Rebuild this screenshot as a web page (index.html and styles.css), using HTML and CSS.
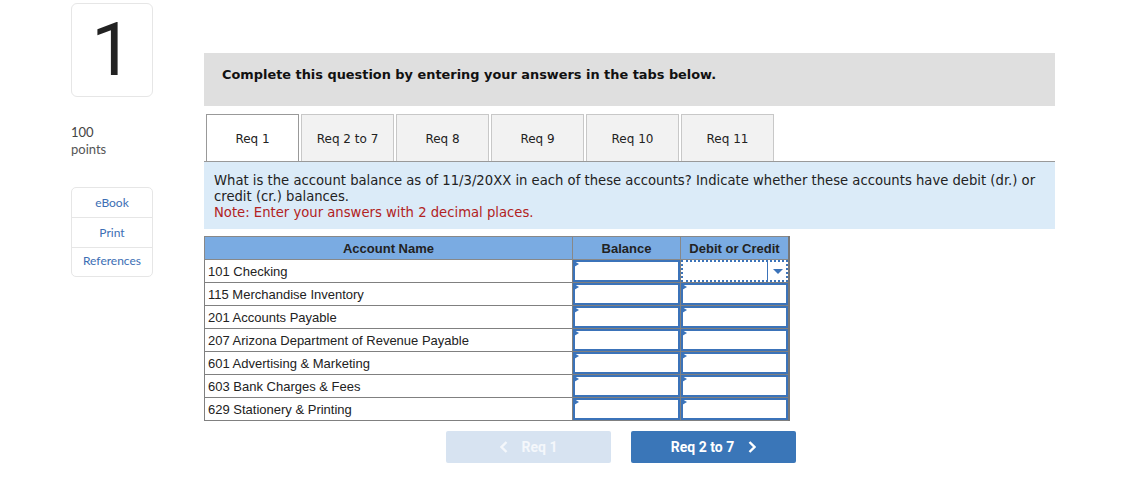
FILE: index.html
```html
<!DOCTYPE html>
<html>
<head>
<meta charset="utf-8">
<link rel="stylesheet" href="styles.css">
</head>
<body>
<div class="page">
  <aside class="side">
    <div class="qnum">1</div>
    <div class="pts"><div class="pts-n">100</div><div class="pts-l">points</div></div>
    <div class="links">
      <div class="link">eBook</div>
      <div class="link">Print</div>
      <div class="link">References</div>
    </div>
  </aside>
  <main class="main">
    <div class="banner">Complete this question by entering your answers in the tabs below.</div>
    <div class="tabs">
      <div class="tab active">Req 1</div>
      <div class="tab">Req 2 to 7</div>
      <div class="tab">Req 8</div>
      <div class="tab">Req 9</div>
      <div class="tab">Req 10</div>
      <div class="tab">Req 11</div>
    </div>
    <div class="prompt">
      <div>What is the account balance as of 11/3/20XX in each of these accounts? Indicate whether these accounts have debit (dr.) or credit (cr.) balances.</div>
      <div class="note">Note: Enter your answers with 2 decimal places.</div>
    </div>
    <table class="grid">
      <thead>
        <tr><th class="c-name">Account Name</th><th class="c-bal">Balance</th><th class="c-dc">Debit or Credit</th></tr>
      </thead>
      <tbody>
        <tr><td class="name">101 Checking</td><td class="in"><div class="box"></div></td><td class="in"><div class="sel"><span class="arrow"></span></div></td></tr>
        <tr><td class="name">115 Merchandise Inventory</td><td class="in"><div class="box"></div></td><td class="in"><div class="box"></div></td></tr>
        <tr><td class="name">201 Accounts Payable</td><td class="in"><div class="box"></div></td><td class="in"><div class="box"></div></td></tr>
        <tr><td class="name">207 Arizona Department of Revenue Payable</td><td class="in"><div class="box"></div></td><td class="in"><div class="box"></div></td></tr>
        <tr><td class="name">601 Advertising &amp; Marketing</td><td class="in"><div class="box"></div></td><td class="in"><div class="box"></div></td></tr>
        <tr><td class="name">603 Bank Charges &amp; Fees</td><td class="in"><div class="box"></div></td><td class="in"><div class="box"></div></td></tr>
        <tr><td class="name">629 Stationery &amp; Printing</td><td class="in"><div class="box"></div></td><td class="in"><div class="box"></div></td></tr>
      </tbody>
    </table>
    <div class="nav">
      <div class="btn prev"><svg class="chev" width="8" height="12" viewBox="0 0 8 12"><polyline points="6.5,1 1.5,6 6.5,11" fill="none" stroke="currentColor" stroke-width="2.4"/></svg><span>Req 1</span></div>
      <div class="btn next"><span>Req 2 to 7</span><svg class="chev" width="8" height="12" viewBox="0 0 8 12"><polyline points="1.5,1 6.5,6 1.5,11" fill="none" stroke="currentColor" stroke-width="2.4"/></svg></div>
    </div>
  </main>
</div>
</body>
</html>
```

FILE: styles.css
```css
html, body { margin: 0; padding: 0; background: #fff; }
.page { display: flex; align-items: flex-start; }
.side {
  margin-left: 71px; margin-top: 3px; width: 82px;
  font-family: Lato, "Open Sans", sans-serif;
}
.qnum {
  box-sizing: border-box; width: 82px; height: 94px;
  border: 1px solid #e6e6e6; border-radius: 6px;
  display: flex; align-items: center; justify-content: center;
  font-family: Roboto, "Open Sans", sans-serif;
  font-size: 74px; line-height: 80px; color: #222; font-weight: 400;
}
.pts { margin-top: 27px; color: #444; font-size: 13px; line-height: 17px; }
.pts-l { color: #555; }
.links {
  margin-top: 29px; border: 1px solid #e6e6e6; border-radius: 5px;
  box-sizing: border-box; width: 82px;
}
.link {
  text-align: center; color: #3c6eb4; font-size: 12px;
  height: 29px; line-height: 29px;
}
.link + .link { border-top: 1px solid #e6e6e6; }
.link:last-child { height: 28px; line-height: 26px; }
.main { margin-left: 51px; margin-top: 53px; width: 851px; }
.banner {
  background: #dfdfdf; height: 53px; box-sizing: border-box;
  padding: 14px 0 0 18px;
  font-family: "DejaVu Sans", Verdana, sans-serif; font-weight: bold;
  font-size: 12.9px; color: #111;
}
.tabs { display: flex; margin-top: 8px; padding-left: 2px; height: 47px; }
.tab {
  box-sizing: border-box; width: 93px; margin-right: 2px; height: 47px;
  background: #f2f2f2; border: 1px solid #c8c8c8; border-bottom: none;
  display: flex; align-items: center; justify-content: center; padding-top: 2px;
  font-family: "DejaVu Sans", Verdana, sans-serif; font-size: 12px; color: #222;
}
.tab.active { background: #fff; border: 1px solid #999; border-bottom: none; }
.prompt {
  background: #dbebf8; border-top: 1px solid #999;
  padding: 11px 10px 7px 10px; height: 68px; box-sizing: border-box;
  font-family: "DejaVu Sans", Verdana, sans-serif; font-size: 13.2px; line-height: 16px; color: #222;
}
.note { color: #b22222; }
.grid {
  margin-top: 7px; border-collapse: collapse;
  font-family: "Liberation Sans", Arial, sans-serif; font-size: 13px; color: #222;
  border-left: 1px solid #777; border-right: 2px solid #777; border-top: 1px solid #777; border-bottom: 1px solid #777;
}
.grid th {
  background: #7aabe2; height: 22px; padding: 0; font-weight: bold;
  border: 1px solid #888; text-align: center;
}
.c-name { width: 367px; }
.c-bal { width: 107px; }
.c-dc { width: 107px; }
.grid td { border: 1px solid #808080; height: 22px; padding: 0; }
.grid td.name { padding-left: 3px; }
.box, .sel {
  box-sizing: border-box; height: 22px; border: 2px solid #3b73b9; position: relative;
}
.box::before {
  content: ""; position: absolute; left: -1px; top: -1px;
  border-left: 5px solid #3b73b9; border-top: 3px solid transparent; border-bottom: 3px solid transparent;
}
.sel { border: 2px dotted #3b73b9; }
.arrow {
  position: absolute; right: 0; top: 0; bottom: 0; width: 18px;
  border-left: 1px solid #3b73b9;
}
.arrow::after {
  content: ""; position: absolute; left: 5px; top: 7px;
  border-top: 5px solid #3b73b9; border-left: 5px solid transparent; border-right: 5px solid transparent;
}
.nav { display: flex; gap: 20px; margin-top: 10px; padding-left: 242px; }
.btn {
  width: 165px; height: 32px; border-radius: 2px;
  display: flex; align-items: center; justify-content: center; gap: 14px;
  font-family: Roboto, "Liberation Sans", sans-serif; font-weight: bold; font-size: 14px; color: #fff;
}
.prev { background: #d7e3f1; color: #f4f7fb; }
.next { background: #3a76b8; }
.chev { display: block; }
```
